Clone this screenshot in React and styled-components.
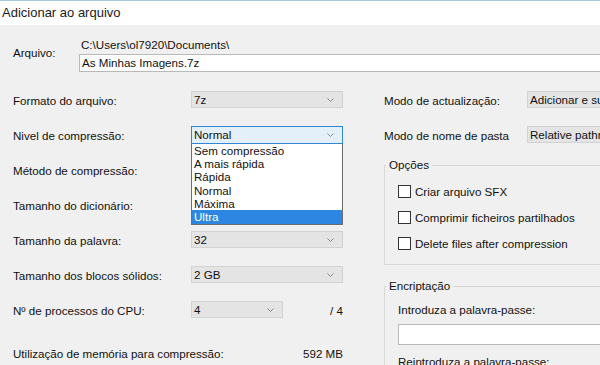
import React from 'react'
import styled, { createGlobalStyle } from 'styled-components'

const GlobalStyle = createGlobalStyle`
  html, body {
    margin: 0;
    padding: 0;
    background: #f0f0f0;
  }
  body {
    font-family: "Liberation Sans", Arial, sans-serif;
    font-size: 11.6px;
    color: #111;
  }
`

const Window = styled.div`
  width: 600px;
  height: 365px;
  overflow: hidden;
  background: #f0f0f0;
`

const TitleBar = styled.div`
  height: 24px;
  line-height: 24px;
  border-top: 1px solid #a9c9db;
  background: #fff;
  padding-left: 2px;
  font-size: 13px;
  color: #1a1a1a;
`

const Body = styled.div`
  padding-left: 13px;
`

const FileBlock = styled.div`
  display: flex;
  margin-top: 13px;
`

const FileLabel = styled.div`
  width: 66px;
  flex-shrink: 0;
  margin-top: 8px;
  line-height: 14px;
`

const FileFields = styled.div`
  flex: 1;
`

const PathText = styled.div`
  line-height: 14px;
  padding-left: 2px;
  margin-bottom: 2px;
`

const TextBox = styled.div`
  box-sizing: border-box;
  height: ${p => p.$h || 18}px;
  line-height: ${p => (p.$h || 18) - 2}px;
  background: #fff;
  border: 1px solid #b9b9b9;
  border-right: none;
  padding-left: 2px;
  margin-top: ${p => p.$mt || 0}px;
`

const Columns = styled.div`
  display: flex;
  margin-top: 10px;
`

const LeftColumn = styled.div`
  width: 371px;
  flex-shrink: 0;
`

const RightColumn = styled.div`
  width: 260px;
  flex-shrink: 0;
`

const Row = styled.div`
  display: flex;
  align-items: center;
  height: 35px;
  width: ${p => p.$w || 330}px;
  margin-top: ${p => p.$mt || 0}px;
`

const Label = styled.div`
  width: ${p => p.$w || 178}px;
  flex-shrink: 0;
  padding-top: 2px;
  line-height: 14px;
  white-space: nowrap;
`

const Value = styled.div`
  margin-left: auto;
  padding-top: 2px;
  line-height: 14px;
`

const SelectWrap = styled.div`
  position: relative;
  width: ${p => p.$w || 152}px;
  flex-shrink: 0;
`

const SelectBox = styled.div`
  box-sizing: border-box;
  display: flex;
  align-items: center;
  height: ${p => (p.$open ? 18 : 17)}px;
  padding-left: 2px;
  padding-right: 8px;
  background: ${p => (p.$open ? '#e3eff9' : '#e4e4e4')};
  border: 1px solid ${p => (p.$open ? '#2f86d6' : '#d2d2d2')};
  white-space: nowrap;
  overflow: hidden;
`

const SelectText = styled.span`
  flex: 1;
  line-height: 15px;
`

const Chevron = styled.svg`
  flex-shrink: 0;
  width: 7px;
  height: 4px;
`

const DropList = styled.ul`
  position: absolute;
  top: 100%;
  left: 0;
  width: 152px;
  box-sizing: border-box;
  margin: 0;
  padding: 0;
  list-style: none;
  background: #fff;
  border: 1px solid #6d6d6d;
  border-top: none;
  z-index: 2;
`

const DropItem = styled.li`
  height: 13.4px;
  line-height: 13.4px;
  padding-left: 2px;
  background: ${p => (p.$active ? '#2d87e2' : 'transparent')};
  color: ${p => (p.$active ? '#fff' : '#111')};
`

const Group = styled.fieldset`
  margin: ${p => p.$mt}px 0 0 0;
  padding: ${p => p.$pt}px 0 ${p => p.$pb}px 13px;
  border: 1px solid #d9d9d9;
  min-width: 0;
`

const Legend = styled.legend`
  margin-left: -12px;
  padding: 0 3px;
  line-height: 14px;
`

const CheckRow = styled.label`
  display: flex;
  align-items: center;
  height: 26px;
`

const CheckBox = styled.span`
  box-sizing: border-box;
  width: 13px;
  height: 13px;
  border: 1px solid #333;
  background: #fff;
  margin-right: 4px;
`

const FieldText = styled.div`
  line-height: 14px;
  margin-top: ${p => p.$mt || 0}px;
`

function Select({ value, width, open, children }) {
  return (
    <SelectWrap $w={width}>
      <SelectBox $open={open}>
        <SelectText>{value}</SelectText>
        <Chevron viewBox="0 0 7 4">
          <polyline points="0.5,0.5 3.5,3.5 6.5,0.5" fill="none" stroke="#8a8a8a" strokeWidth="1" />
        </Chevron>
      </SelectBox>
      {children}
    </SelectWrap>
  )
}

const levels = ['Sem compressão', 'A mais rápida', 'Rápida', 'Normal', 'Máxima', 'Ultra']

export default function App() {
  return (
    <>
      <GlobalStyle />
      <Window>
        <TitleBar>Adicionar ao arquivo</TitleBar>
        <Body>
          <FileBlock>
            <FileLabel>Arquivo:</FileLabel>
            <FileFields>
              <PathText>C:\Users\ol7920\Documents\</PathText>
              <TextBox>As Minhas Imagens.7z</TextBox>
            </FileFields>
          </FileBlock>

          <Columns>
            <LeftColumn>
              <Row>
                <Label>Formato do arquivo:</Label>
                <Select value="7z" />
              </Row>
              <Row>
                <Label>Nivel de compressão:</Label>
                <Select value="Normal" open>
                  <DropList>
                    {levels.map(l => (
                      <DropItem key={l} $active={l === 'Ultra'}>{l}</DropItem>
                    ))}
                  </DropList>
                </Select>
              </Row>
              {/* these two boxes sit under the open list */}
              <Row>
                <Label>Método de compressão:</Label>
                <Select value="" />
              </Row>
              <Row>
                <Label>Tamanho do dicionário:</Label>
                <Select value="" />
              </Row>
              <Row>
                <Label>Tamanho da palavra:</Label>
                <Select value="32" />
              </Row>
              <Row>
                <Label>Tamanho dos blocos sólidos:</Label>
                <Select value="2 GB" />
              </Row>
              <Row>
                <Label>Nº de processos do CPU:</Label>
                <Select value="4" width={92} />
                <Value>/ 4</Value>
              </Row>
              <Row $mt={8}>
                <Label>Utilização de memória para compressão:</Label>
                <Value>592 MB</Value>
              </Row>
            </LeftColumn>

            <RightColumn>
              <Row $w={260}>
                <Label $w={143}>Modo de actualização:</Label>
                <Select value="Adicionar e substituir ficheiros" width={140} />
              </Row>
              <Row $w={260}>
                <Label $w={143}>Modo de nome de pasta</Label>
                <Select value="Relative pathnames" width={140} />
              </Row>

              <Group $mt={6} $pt={6} $pb={8}>
                <Legend>Opções</Legend>
                <CheckRow><CheckBox />Criar arquivo SFX</CheckRow>
                <CheckRow><CheckBox />Comprimir ficheiros partilhados</CheckRow>
                <CheckRow><CheckBox />Delete files after compression</CheckRow>
              </Group>

              <Group $mt={14} $pt={10} $pb={10}>
                <Legend>Encriptação</Legend>
                <FieldText>Introduza a palavra-passe:</FieldText>
                <TextBox $h={21} $mt={7} />
                <FieldText $mt={10}>Reintroduza a palavra-passe:</FieldText>
                <TextBox $h={21} $mt={7} />
              </Group>
            </RightColumn>
          </Columns>
        </Body>
      </Window>
    </>
  )
}
